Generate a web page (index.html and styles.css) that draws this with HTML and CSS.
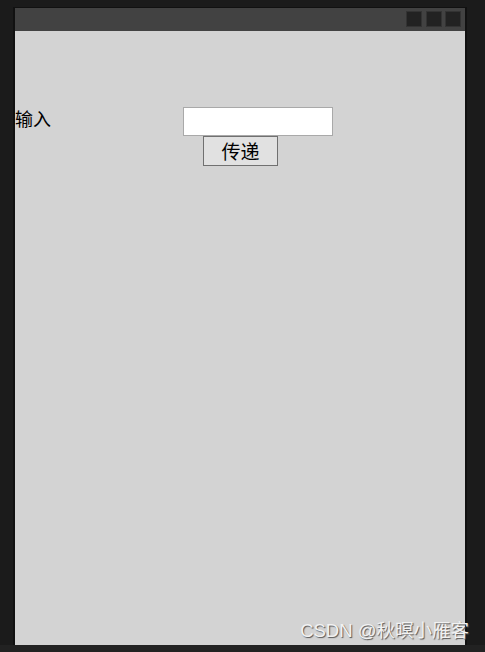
FILE: index.html
```html
<!DOCTYPE html>
<html lang="zh-CN">
<head>
<meta charset="utf-8">
<title>传递</title>
<link rel="stylesheet" href="styles.css">
</head>
<body>
<div class="frame">
  <div class="titlebar">
    <span class="tb-btn"></span>
    <span class="tb-btn tb-btn-mid"></span>
    <span class="tb-btn"></span>
  </div>
  <div class="content">
    <div class="row">
      <label class="label">输入</label>
      <input class="field" type="text">
    </div>
    <button class="send">传递</button>
  </div>
</div>
<div class="bottom"></div>
<div class="watermark">CSDN @秋暝小雁客</div>
</body>
</html>
```
FILE: styles.css
```css
html, body {
  margin: 0;
  padding: 0;
}
body {
  width: 485px;
  height: 652px;
  overflow: hidden;
  background: #1b1b1b;
  position: relative;
  font-family: "Noto Sans CJK SC", "Noto Sans", sans-serif;
}
.frame {
  margin: 7px 0 0 13px;
  width: 454px;
  height: 638px;
  box-sizing: border-box;
  border-top: 1px solid #111;
  border-left: 2px solid #111;
  border-right: 2px solid #111;
  display: flex;
  flex-direction: column;
}
.titlebar {
  height: 23px;
  flex: none;
  background: #424242;
  display: flex;
  justify-content: flex-end;
  align-items: flex-start;
  padding: 3px 4px 0 0;
  box-sizing: border-box;
  gap: 3px;
}
.tb-btn {
  width: 16px;
  height: 16px;
  box-sizing: border-box;
  background: #222;
  border: 1px solid #333;
}
.tb-btn-mid {
  margin-left: 1px;
}
.content {
  flex: 1;
  background: #d3d3d3;
  padding-top: 76px;
  box-sizing: border-box;
}
.row {
  display: flex;
  align-items: center;
}
.label {
  width: 168px;
  font-size: 18px;
  line-height: 24px;
  color: #000;
  margin-top: -7px;
}
.field {
  width: 150px;
  height: 29px;
  box-sizing: border-box;
  margin: 0;
  border: 1px solid #a9a9a9;
  background: #fff;
  padding: 0 4px;
}
.send {
  display: block;
  margin: 0 0 0 188px;
  width: 75px;
  height: 30px;
  box-sizing: border-box;
  border: 1px solid #707070;
  background: #e1e1e1;
  font-family: "Noto Sans CJK SC", sans-serif;
  font-size: 19px;
  line-height: 26px;
  padding: 0;
  color: #000;
}
.bottom {
  height: 7px;
  background: #222;
}
.watermark {
  position: absolute;
  right: 16px;
  top: 618px;
  font-family: "Liberation Sans", "Noto Sans CJK SC", sans-serif;
  font-size: 18.5px;
  line-height: 26px;
  color: #f2f2f2;
  text-shadow: 1px 1px 1px #555;
  white-space: nowrap;
}
```
